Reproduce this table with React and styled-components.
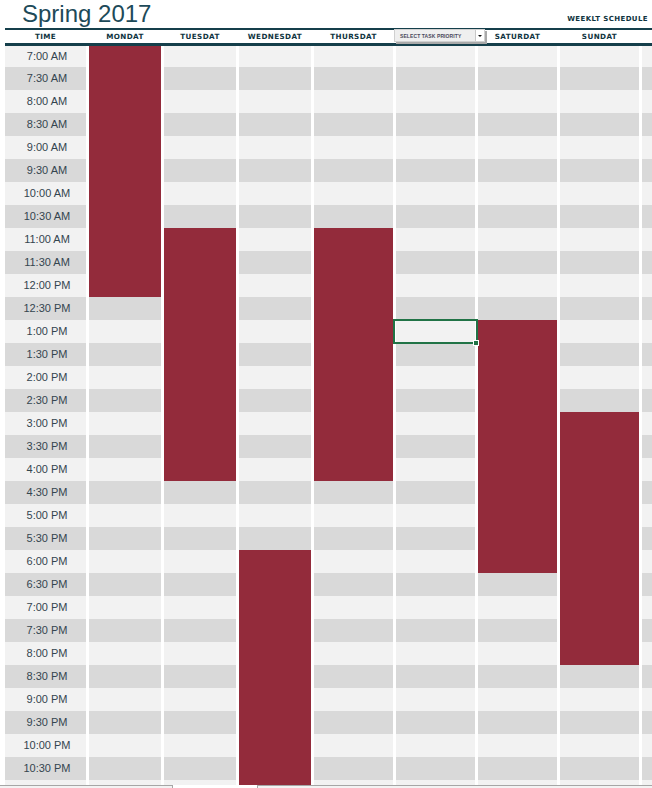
import React from 'react';
import styled, {createGlobalStyle} from "styled-components";

const GlobalStyle = createGlobalStyle`
  html, body {
    margin: 0;
    padding: 0;
    background: #ffffff;
    overflow: hidden;
  }
  body {
    font-family: "Liberation Sans", Arial, sans-serif;
  }
`;

const INK = '#153f4b';
const RED = '#932b3b';

const Sheet = styled.div`
  width: 652px;
  height: 788px;
  overflow: hidden;
`;
const Wrap = styled.div`
  margin-left: 5px;
`;
const TitleBar = styled.div`
  height: 28px;
  display: flex;
  align-items: flex-end;
  justify-content: space-between;
  padding-left: 17px;
  padding-right: 4px;
`;
const Title = styled.h1`
  margin: 0;
  font-family: "Liberation Sans", Arial, sans-serif;
  font-weight: 400;
  font-size: 24px;
  line-height: 28px;
  color: #1d4a59;
`;
const Caption = styled.div`
  font-family: "DejaVu Sans", sans-serif;
  font-weight: 700;
  font-size: 7px;
  letter-spacing: 0.4px;
  color: #0f3440;
  margin-bottom: 5px;
`;
const HeaderRow = styled.div`
  display: flex;
  gap: 3px;
  height: 13px;
  border-top: 2px solid ${INK};
  border-bottom: 3px solid ${INK};
`;
const HeaderCell = styled.div`
  position: relative;
  flex: none;
  width: ${p => p.$w}px;
  display: flex;
  align-items: center;
  justify-content: center;
  font-family: "DejaVu Sans", sans-serif;
  font-weight: 700;
  font-size: 7.2px;
  letter-spacing: 0.4px;
  color: #0f3440;
`;
const Dropdown = styled.div`
  position: absolute;
  left: -2px;
  top: -1px;
  width: 89px;
  height: 11px;
  display: flex;
  align-items: center;
  background: #efefef;
  border: 1px solid #d0d0d0;
  box-shadow: 2px 2px 0 #a9a9a9;
  z-index: 2;
`;
const DropText = styled.span`
  flex: 1;
  padding-left: 5px;
  font-family: "Liberation Sans", Arial, sans-serif;
  font-weight: 700;
  font-size: 5px;
  letter-spacing: 0.1px;
  color: #4a4a5c;
  white-space: nowrap;
`;
const DropButton = styled.div`
  flex: none;
  width: 8px;
  height: 100%;
  background: #ffffff;
  border-left: 1px solid #c8c8c8;
  display: flex;
  align-items: center;
  justify-content: center;
  &::after {
    content: "";
    border-left: 2px solid transparent;
    border-right: 2px solid transparent;
    border-top: 2px solid #111;
    margin-top: 1px;
  }
`;
const Board = styled.div`
  display: flex;
  gap: 3px;
`;
const Column = styled.div`
  flex: none;
  width: ${p => p.$w}px;
  display: grid;
  grid-template-columns: 100%;
  grid-template-rows: 21px repeat(31, 23px) 5px;
`;
const Stripes = styled.div`
  grid-row: 1 / -1;
  grid-column: 1;
  display: flex;
  flex-direction: column;
`;
const Cell = styled.div`
  flex: none;
  height: ${p => p.$h}px;
  background: ${p => (p.$alt ? '#d9d9d9' : '#f2f2f2')};
  display: flex;
  align-items: center;
  justify-content: center;
  padding: 0 0 2px 3px;
  box-sizing: border-box;
  font-size: 11px;
  color: #34454f;
  white-space: nowrap;
  ${p => p.$selected && `
    position: relative;
    z-index: 3;
    &::before {
      content: "";
      position: absolute;
      left: -3px;
      right: -3px;
      top: -1px;
      bottom: -1px;
      border: 2px solid #217346;
    }
    &::after {
      content: "";
      position: absolute;
      right: -4px;
      bottom: -3px;
      width: 4px;
      height: 4px;
      background: #217346;
      border: 1px solid #ffffff;
    }
  `}
`;
const Event = styled.div`
  grid-column: 1;
  grid-row: ${p => p.$start + 1} / span ${p => p.$span};
  background: ${RED};
  z-index: 1;
`;
const TabBar = styled.div`
  height: 12px;
  border-top: 1px solid #a6a6a6;
  background: #f3f3f3;
  display: flex;
  padding-left: 172px;
`;
const ActiveTab = styled.div`
  width: 84px;
  height: 13px;
  margin-top: -1px;
  background: #ffffff;
  border-left: 1px solid #a6a6a6;
  border-right: 1px solid #a6a6a6;
`;

const columns = [
  {label: 'TIME', w: 81},
  {label: 'MONDAT', w: 72},
  {label: 'TUESDAT', w: 72},
  {label: 'WEDNESDAT', w: 72},
  {label: 'THURSDAT', w: 79},
  {label: '', w: 79, dropdown: true},
  {label: 'SATURDAT', w: 79},
  {label: 'SUNDAT', w: 79},
  {label: '', w: 10},
];

// start row index (0 = 7:00 AM) and number of half hours
const events = {
  1: {start: 0, span: 11},
  2: {start: 8, span: 11},
  3: {start: 22, span: 11},
  4: {start: 8, span: 11},
  6: {start: 12, span: 11},
  7: {start: 16, span: 11},
};

const times = [];
for (let i = 0; i < 32; i++) {
  const mins = 7 * 60 + i * 30;
  const h24 = Math.floor(mins / 60);
  const m = mins % 60;
  const h = h24 > 12 ? h24 - 12 : h24;
  times.push(`${h}:${m === 0 ? '00' : '30'} ${h24 >= 12 ? 'PM' : 'AM'}`);
}
times.push('');

const rowHeight = (i) => (i === 0 ? 21 : i === times.length - 1 ? 5 : 23);

const App = () => {
  return (
    <Sheet>
      <GlobalStyle />
      <Wrap>
        <TitleBar>
          <Title>Spring 2017</Title>
          <Caption>WEEKLT SCHEDULE</Caption>
        </TitleBar>
        <HeaderRow>
          {columns.map((col, c) => (
            <HeaderCell key={c} $w={col.w}>
              {col.label}
              {col.dropdown && (
                <Dropdown>
                  <DropText>SELECT TASK PRIORITY</DropText>
                  <DropButton />
                </Dropdown>
              )}
            </HeaderCell>
          ))}
        </HeaderRow>
        <Board>
          {columns.map((col, c) => (
            <Column key={c} $w={col.w}>
              <Stripes>
                {times.map((t, r) => (
                  <Cell key={r} $h={rowHeight(r)} $alt={r % 2 === 1} $selected={c === 5 && r === 12}>
                    {c === 0 ? t : null}
                  </Cell>
                ))}
              </Stripes>
              {events[c] && <Event $start={events[c].start} $span={events[c].span} />}
            </Column>
          ))}
        </Board>
      </Wrap>
      <TabBar>
        <ActiveTab />
      </TabBar>
    </Sheet>
  );
};

export default App;
